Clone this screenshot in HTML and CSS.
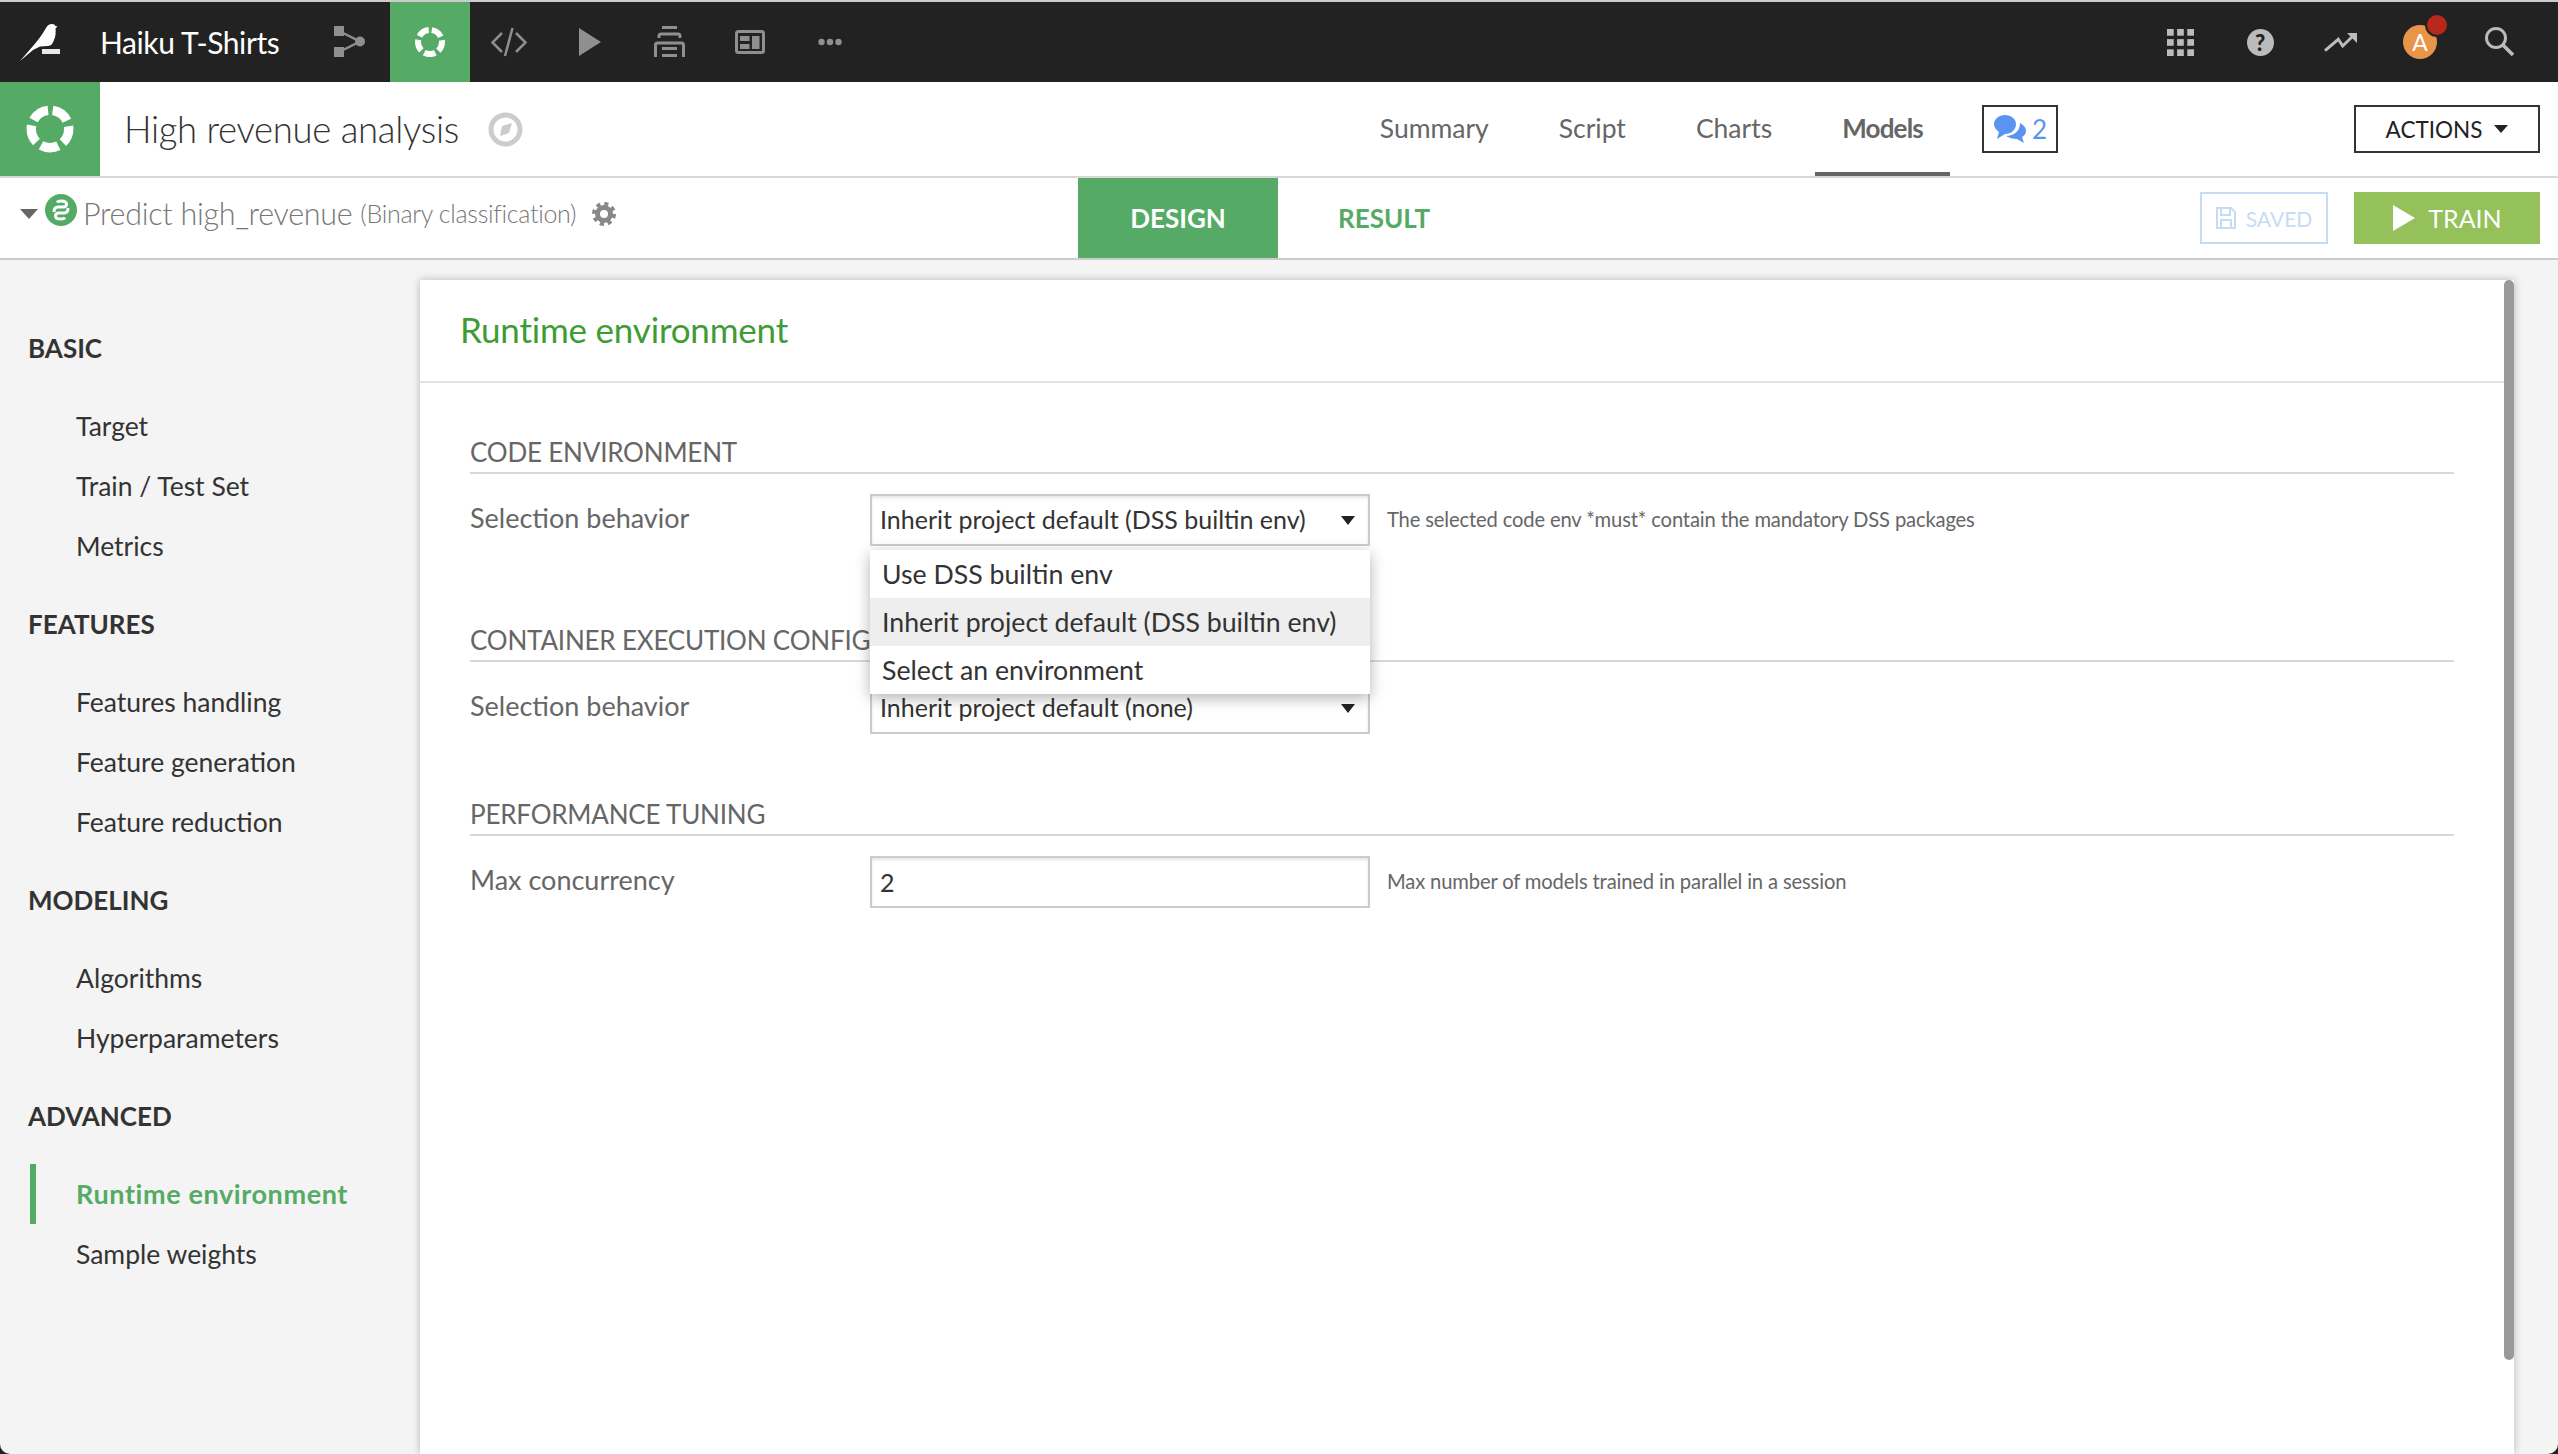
FILE: index.html
```html
<!DOCTYPE html>
<html lang="en">
<head>
  <meta charset="UTF-8" />
  <title>High revenue analysis</title>
  <link rel="stylesheet" href="styles.css">
</head>
<body>
  <div class="app">
    <header class="topbar">
      <svg class="logo" viewBox="0 0 40 38"><path d="M0 38L13 23C18 17 22 12 26 5Q28 1 32 1Q35 1 35.500 3L37.500 3.500L35.500 5.500C36 9 35.500 14 34 17C33 20 31 23 28 23L20 23.500L13 27Z" fill="#fff"/><rect x="22" y="26" width="18" height="5" fill="#e8e8e8"/></svg>
      <span class="project">Haiku T-Shirts</span>
      <nav class="topnav">
        <a class="topnav-item"><svg width="32" height="32" viewBox="0 0 32 32"><rect x="0" y="0" width="10" height="10" fill="#8f8f8f"/><rect x="0" y="21" width="10" height="10" fill="#8f8f8f"/><circle cx="26" cy="15.500" r="5" fill="#8f8f8f"/><path d="M5 5L26 15.500L5 26" fill="none" stroke="#8f8f8f" stroke-width="2.500"/></svg></a>
        <a class="topnav-item active"><svg width="32" height="32" viewBox="0 0 32 32"><circle cx="16" cy="16" r="12" fill="none" stroke="#fff" stroke-width="6" stroke-dasharray="11.5 3.58" stroke-dashoffset="-1.8" transform="rotate(-90 16 16)"/></svg></a>
        <a class="topnav-item"><svg width="38" height="32" viewBox="0 0 38 32"><path d="M11 7L1.500 16.500L11 26M25 7L34.500 16.500L25 26M21.500 2L14 30" fill="none" stroke="#8f8f8f" stroke-width="2.500"/></svg></a>
        <a class="topnav-item"><svg width="24" height="28" viewBox="0 0 24 28"><path d="M1 0L23 14L1 28Z" fill="#8f8f8f"/></svg></a>
        <a class="topnav-item"><svg width="32" height="32" viewBox="0 0 32 32"><path d="M8 1.500H23M5 12V10Q5 8 7 8H24Q26 8 26 10V12M1.500 31V19Q1.500 17 3.500 17H27.500Q29.500 17 29.500 19V31M8 22.500H23M8 29.500H23" fill="none" stroke="#8f8f8f" stroke-width="3"/></svg></a>
        <a class="topnav-item"><svg width="30" height="24" viewBox="0 0 30 24"><rect x="1.500" y="1.500" width="27" height="21" rx="2" fill="none" stroke="#8f8f8f" stroke-width="3"/><rect x="5" y="6" width="9.500" height="5" fill="#8f8f8f"/><rect x="5" y="14" width="9.500" height="5" fill="#8f8f8f"/><rect x="17" y="6" width="7.500" height="13" fill="#8f8f8f"/></svg></a>
        <a class="topnav-item"><svg width="24" height="8" viewBox="0 0 24 8"><circle cx="3.500" cy="4" r="3.200" fill="#8f8f8f"/><circle cx="12" cy="4" r="3.200" fill="#8f8f8f"/><circle cx="20.500" cy="4" r="3.200" fill="#8f8f8f"/></svg></a>
      </nav>
      <div class="topright">
        <a class="topright-item"><svg width="27" height="27" viewBox="0 0 27 27" fill="#bbb"><rect width="6.700" height="6.700"/><rect x="10.100" width="6.700" height="6.700"/><rect x="20.300" width="6.700" height="6.700"/><rect y="10.100" width="6.700" height="6.700"/><rect x="10.100" y="10.100" width="6.700" height="6.700"/><rect x="20.300" y="10.100" width="6.700" height="6.700"/><rect y="20.300" width="6.700" height="6.700"/><rect x="10.100" y="20.300" width="6.700" height="6.700"/><rect x="20.300" y="20.300" width="6.700" height="6.700"/></svg></a>
        <a class="topright-item"><span class="help">?</span></a>
        <a class="topright-item"><svg width="36" height="22" viewBox="0 0 36 22"><path d="M3 19.700L16.300 8.300L20.700 15L32 4" fill="none" stroke="#bbb" stroke-width="3"/><path d="M25 2H35V12Z" fill="#bbb"/></svg></a>
        <a class="topright-item"><span class="avatar">A<i class="badge"></i></span></a>
        <a class="topright-item"><svg width="30" height="30" viewBox="0 0 30 30"><circle cx="11" cy="11" r="9.500" fill="none" stroke="#bbb" stroke-width="3"/><path d="M18 18L28 28" stroke="#bbb" stroke-width="3.500"/></svg></a>
      </div>
    </header>

    <div class="objectbar">
      <div class="object-icon"><svg width="50" height="50" viewBox="0 0 32 32"><circle cx="16" cy="16" r="12" fill="none" stroke="#fff" stroke-width="6" stroke-dasharray="11.5 3.58" stroke-dashoffset="-1.8" transform="rotate(-90 16 16)"/></svg></div>
      <h1 class="object-title">High revenue analysis</h1>
      <svg class="tag-icon" width="35" height="35" viewBox="0 0 35 35"><circle cx="17.500" cy="17.500" r="14.500" fill="none" stroke="#ccc" stroke-width="5"/><path d="M12 24L14 14L24 11L21 21Z" fill="#ccc"/></svg>
      <nav class="tabs">
        <a class="tab">Summary</a>
        <a class="tab">Script</a>
        <a class="tab">Charts</a>
        <a class="tab current">Models</a>
      </nav>
      <a class="comments"><svg width="34" height="30" viewBox="0 0 34 30" fill="#5b94f0"><path d="M12 1C18 1 23 5 23 10C23 16 18 20 12 20L4 25L6 18C3 16 1 13 1 10C1 5 6 1 12 1Z"/><path d="M27 9C31 11 33 14 33 17C33 20 31 22 29 23L31 29L24 25C20 25 16 24 13 22C21 22 27 17 27 9Z"/></svg>2</a>
      <a class="btn-actions">ACTIONS <span class="caret"></span></a>
    </div>

    <div class="modelbar">
      <div class="model-name">
        <span class="caret-big"></span>
        <svg class="python" width="32" height="32" viewBox="0 0 32 32"><circle cx="16" cy="16" r="16" fill="#55ab66"/><g fill="none" stroke="#fff" stroke-width="3"><path d="M9 18Q9 13 13 13H18Q21.500 13 21.500 10Q21.500 7 16 7Q13 7 12 8.500"/><path d="M23 14Q23 19 19 19H14Q10.500 19 10.500 22Q10.500 25 16 25Q19 25 20 23.500"/></g></svg>
        <span class="model-title">Predict high_revenue</span>
        <span class="model-type">(Binary classification)</span>
        <svg class="gear" width="24" height="24" viewBox="0 0 24 24"><circle cx="12" cy="12" r="6.500" fill="none" stroke="#888" stroke-width="5"/><circle cx="12" cy="12" r="10" fill="none" stroke="#888" stroke-width="4" stroke-dasharray="4 3.850"/></svg>
      </div>
      <a class="mode mode-on">DESIGN</a>
      <a class="mode">RESULT</a>
      <div class="model-actions">
        <a class="btn-saved"><svg width="20" height="22" viewBox="0 0 20 22"><path d="M1 1H15L19 5V21H1ZM5 1V8H14V1M5 21V13H15V21" fill="none" stroke="#c5dcf5" stroke-width="2"/></svg>SAVED</a>
        <a class="btn-train"><svg width="24" height="26" viewBox="0 0 24 26"><path d="M1 0L23 13L1 26Z" fill="#fff"/></svg>TRAIN</a>
      </div>
    </div>

    <div class="workspace">
      <aside class="sidebar">
        <h4>BASIC</h4>
        <ul>
          <li>Target</li>
          <li>Train / Test Set</li>
          <li>Metrics</li>
        </ul>
        <h4>FEATURES</h4>
        <ul>
          <li>Features handling</li>
          <li>Feature generation</li>
          <li>Feature reduction</li>
        </ul>
        <h4>MODELING</h4>
        <ul>
          <li>Algorithms</li>
          <li>Hyperparameters</li>
        </ul>
        <h4>ADVANCED</h4>
        <ul>
          <li class="selected">Runtime environment</li>
          <li>Sample weights</li>
        </ul>
      </aside>

      <main class="card">
        <h2 class="card-title">Runtime environment</h2>
        <div class="card-body">
          <section class="section first">
            <h3>CODE ENVIRONMENT</h3>
            <div class="row">
              <label>Selection behavior</label>
              <div class="select">
                <span>Inherit project default (DSS builtin env)</span><i class="select-caret"></i>
                <ul class="dropdown">
                  <li>Use DSS builtin env</li>
                  <li class="hover">Inherit project default (DSS builtin env)</li>
                  <li>Select an environment</li>
                </ul>
              </div>
              <span class="help-text">The selected code env *must* contain the mandatory DSS packages</span>
            </div>
          </section>
          <section class="section second">
            <h3>CONTAINER EXECUTION CONFIGURATION</h3>
            <div class="row">
              <label>Selection behavior</label>
              <div class="select">
                <span>Inherit project default (none)</span><i class="select-caret"></i>
              </div>
            </div>
          </section>
          <section class="section">
            <h3>PERFORMANCE TUNING</h3>
            <div class="row">
              <label>Max concurrency</label>
              <div class="select input">2</div>
              <span class="help-text">Max number of models trained in parallel in a session</span>
            </div>
          </section>
        </div>
        <div class="scrollbar"></div>
      </main>
    </div>
  </div>
</body>
</html>
```

FILE: styles.css
```css
html, body {
  margin: 0;
  height: 100%;
}
body {
  background: #222;
  font-family: Lato, "Open Sans", sans-serif;
  color: #333;
  overflow: hidden;
}
.app {
  height: 1454px;
  display: flex;
  flex-direction: column;
  background: #f4f4f4;
  border-radius: 0 0 10px 10px;
  overflow: hidden;
}
h1, h2, h3, h4, ul {
  margin: 0;
  padding: 0;
  font-weight: normal;
}
ul {
  list-style: none;
}

/* top bar */
.topbar {
  height: 80px;
  flex: none;
  display: flex;
  align-items: center;
  background: #222;
  border-top: 2px solid #ccc;
}
.logo {
  width: 40px;
  height: 38px;
  margin-left: 20px;
  flex: none;
}
.project {
  margin-left: 40px;
  width: 210px;
  color: #fff;
  font-size: 30px;
  letter-spacing: -0.4px;
}
.topnav {
  display: flex;
  height: 100%;
}
.topnav-item {
  width: 80px;
  display: flex;
  align-items: center;
  justify-content: center;
}
.topnav-item.active {
  background: #55ab66;
}
.topright {
  margin-left: auto;
  margin-right: 18px;
  display: flex;
  height: 100%;
}
.topright-item {
  width: 80px;
  display: flex;
  align-items: center;
  justify-content: center;
}
.help {
  width: 27px;
  height: 27px;
  border-radius: 50%;
  background: #bbb;
  color: #222;
  font-size: 22px;
  font-weight: 900;
  line-height: 27px;
  text-align: center;
}
.avatar {
  position: relative;
  width: 34px;
  height: 34px;
  border-radius: 50%;
  background: #e8954a;
  color: #fff;
  font-size: 23px;
  line-height: 34px;
  text-align: center;
}
.badge {
  position: absolute;
  top: -10px;
  right: -10px;
  width: 20px;
  height: 20px;
  border-radius: 50%;
  background: #b8281a;
  box-shadow: 0 0 0 2px #222;
}

/* object bar */
.objectbar {
  height: 94px;
  flex: none;
  display: flex;
  align-items: center;
  background: #fff;
  border-bottom: 2px solid #d8d8d8;
  padding-right: 18px;
}
.object-icon {
  width: 100px;
  height: 94px;
  background: #55ab66;
  display: flex;
  align-items: center;
  justify-content: center;
}
.object-title {
  margin-left: 24px;
  font-size: 36.5px;
  font-weight: 300;
  letter-spacing: -0.3px;
}
.tag-icon {
  margin-left: 29px;
}
.tabs {
  margin-left: auto;
  display: flex;
  gap: 16px;
  height: 94px;
}
.tab {
  padding: 0 27px;
  color: #666;
  font-size: 26.5px;
  line-height: 92px;
  height: 90px;
  margin-bottom: -2px;
}
.tab.current {
  font-size: 26px;
  font-weight: 700;
  letter-spacing: -0.8px;
  border-bottom: 4px solid #666;
}
.comments {
  margin-left: 32px;
  width: 76px;
  height: 48px;
  box-sizing: border-box;
  border: 2px solid #333;
  color: #5b94f0;
  font-size: 26px;
  display: flex;
  align-items: center;
  justify-content: center;
  gap: 5px;
}
.btn-actions {
  margin-left: 296px;
  width: 186px;
  height: 48px;
  box-sizing: border-box;
  border: 2px solid #333;
  font-size: 22.5px;
  display: flex;
  align-items: center;
  justify-content: center;
  gap: 12px;
  color: #222;
}
.caret {
  border: 7px solid transparent;
  border-top: 8px solid #222;
  border-bottom: 0;
}

/* model bar */
.modelbar {
  height: 80px;
  flex: none;
  display: flex;
  align-items: center;
  background: #fff;
  border-bottom: 2px solid #ccc;
  padding-right: 18px;
}
.model-name {
  width: 1078px;
  margin-top: -11px;
  display: flex;
  align-items: center;
  padding-left: 20px;
  box-sizing: border-box;
  color: #777;
}
.caret-big {
  border: 9px solid transparent;
  border-top: 10px solid #666;
  border-bottom: 0;
  margin: 2px 7px 0 0;
}
.python {
  margin-top: -5px;
}
.model-title {
  margin-left: 6px;
  font-size: 30.5px;
  font-weight: 300;
  letter-spacing: -0.3px;
}
.model-type {
  margin-left: 8px;
  font-size: 25px;
  font-weight: 300;
  letter-spacing: -0.3px;
}
.gear {
  margin: 2px 0 0 16px;
}
.mode {
  color: #55ab66;
  font-size: 26px;
  font-weight: 700;
  width: 200px;
  line-height: 80px;
  text-align: center;
}
.mode + .mode {
  width: auto;
  margin-left: 60px;
}
.mode-on {
  background: #55ab66;
  color: #fff;
}
.model-actions {
  margin-left: auto;
  display: flex;
  gap: 26px;
}
.btn-saved {
  width: 128px;
  height: 52px;
  box-sizing: border-box;
  border: 2px solid #c5dcf5;
  color: #c5dcf5;
  font-size: 21px;
  display: flex;
  align-items: center;
  justify-content: center;
  gap: 10px;
}
.btn-train {
  width: 186px;
  height: 52px;
  background: #94c159;
  color: #fff;
  font-size: 25px;
  display: flex;
  align-items: center;
  justify-content: center;
  gap: 12px;
}

/* workspace */
.workspace {
  flex: 1;
  display: flex;
  min-height: 0;
}
.sidebar {
  width: 420px;
  flex: none;
  box-sizing: border-box;
  padding-top: 68px;
}
.sidebar h4 {
  padding-left: 28px;
  font-size: 26px;
  font-weight: 700;
  line-height: 40px;
  margin-bottom: 28px;
}
.sidebar ul {
  margin-bottom: 28px;
}
.sidebar li {
  margin-left: 30px;
  padding-left: 40px;
  border-left: 6px solid transparent;
  font-size: 26.5px;
  line-height: 60px;
}
.sidebar li.selected {
  border-left-color: #55ab66;
  color: #55ab66;
  font-size: 27px;
  font-weight: 700;
  letter-spacing: 0.6px;
}

/* main card */
.card {
  position: relative;
  width: 2094px;
  margin-top: 20px;
  background: #fff;
  box-shadow: 0 0 8px rgba(0, 0, 0, 0.25);
}
.card-title {
  height: 101px;
  line-height: 98px;
  padding-left: 40px;
  border-bottom: 2px solid #e2e2e2;
  margin-right: 10px;
  color: #3f9c35;
  font-size: 35px;
  letter-spacing: -0.2px;
}
.card-body {
  padding: 49px 60px 0 50px;
}
.section {
  margin-top: 60px;
}
.section.first {
  margin-top: 0;
}
.section.second {
  margin-top: 74px;
}
.section h3 {
  height: 40px;
  line-height: 40px;
  border-bottom: 2px solid #d8d8d8;
  color: #666;
  font-size: 26px;
  font-weight: 400;
  letter-spacing: -0.2px;
  margin-bottom: 20px;
}
.row {
  display: flex;
  align-items: center;
}
.row label {
  width: 400px;
  color: #666;
  font-size: 27px;
  margin-top: -6px;
}
.select {
  position: relative;
  width: 500px;
  height: 52px;
  box-sizing: border-box;
  border: 2px solid #ccc;
  box-shadow: inset 0 2px 3px rgba(0, 0, 0, 0.1);
  padding: 0 0 2px 8px;
  display: flex;
  align-items: center;
  justify-content: space-between;
  font-size: 25px;
  color: #333;
}
.select.input {
  padding-bottom: 0;
}
.select-caret {
  margin: 2px 13px 0 0;
  border: 7px solid transparent;
  border-top: 9px solid #222;
  border-bottom: 0;
}
.dropdown {
  position: absolute;
  top: 54px;
  left: -2px;
  width: 500px;
  background: #fff;
  box-shadow: 0 4px 14px rgba(0, 0, 0, 0.3);
  z-index: 5;
}
.dropdown li {
  height: 48px;
  line-height: 48px;
  padding-left: 12px;
  font-size: 26.7px;
}
.dropdown li.hover {
  background: #eee;
}
.help-text {
  margin: -2px 0 0 17px;
  color: #666;
  font-size: 20.2px;
  letter-spacing: -0.15px;
}
.scrollbar {
  position: absolute;
  top: 0;
  right: 0;
  width: 10px;
  height: 1080px;
  border-radius: 5px;
  background: #999;
}
```
